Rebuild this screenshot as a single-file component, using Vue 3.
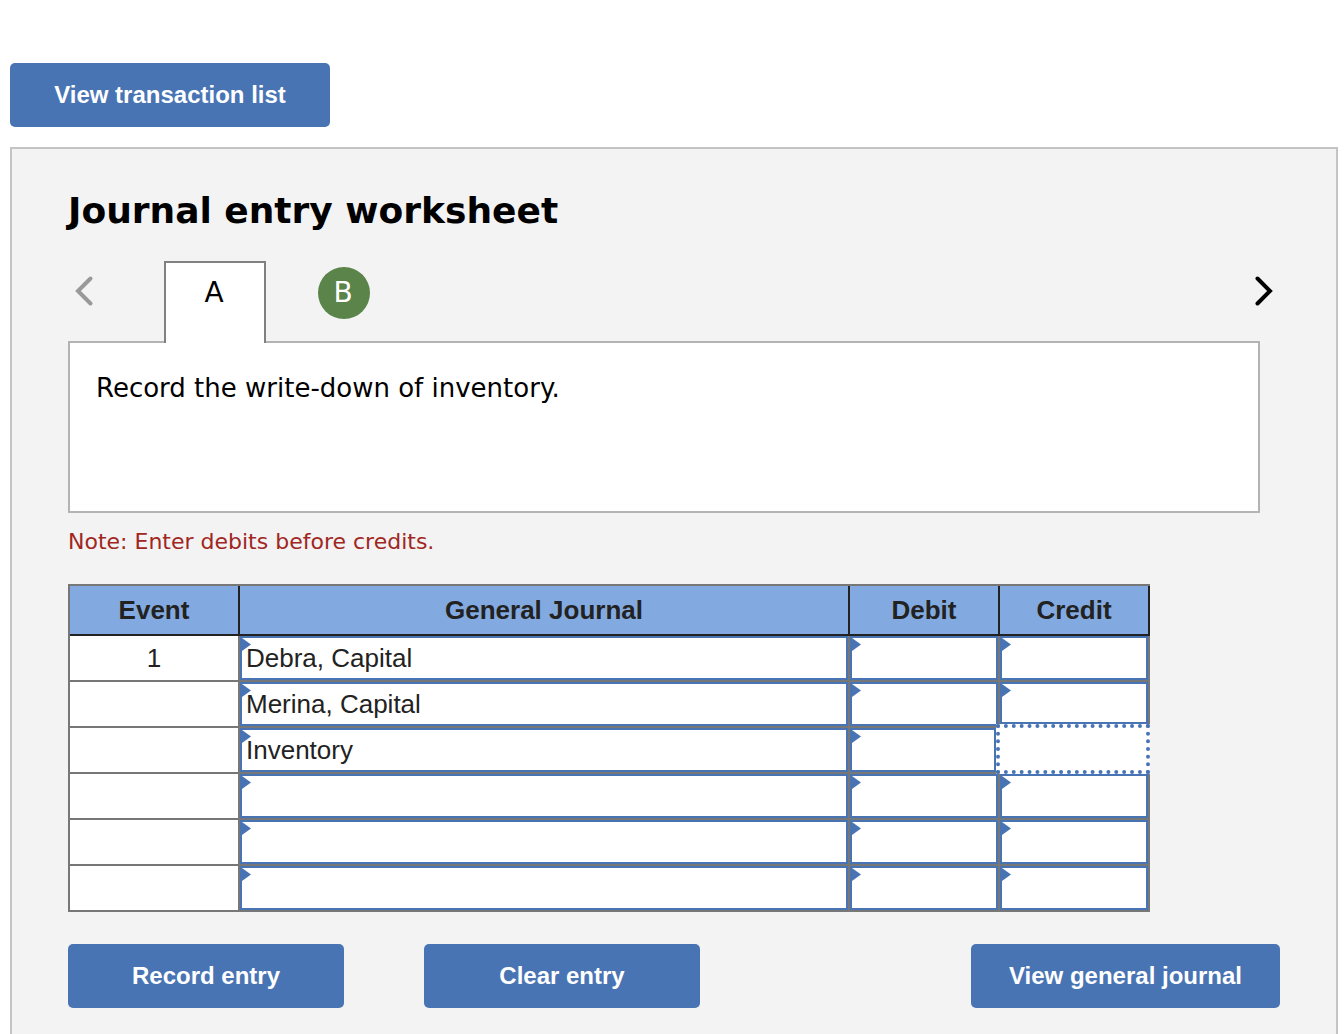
<script setup>
import { ref } from 'vue'

const rows = ref([
  { event: '1', account: 'Debra, Capital', debit: '', credit: '' },
  { event: '', account: 'Merina, Capital', debit: '', credit: '' },
  { event: '', account: 'Inventory', debit: '', credit: '' },
  { event: '', account: '', debit: '', credit: '' },
  { event: '', account: '', debit: '', credit: '' },
  { event: '', account: '', debit: '', credit: '' },
])

const fields = [
  { key: 'account', label: 'General Journal' },
  { key: 'debit', label: 'Debit' },
  { key: 'credit', label: 'Credit' },
]

const active = { row: 2, key: 'credit' }

function cellClass(rowIndex, key) {
  return {
    active: rowIndex === active.row && key === active.key,
    'above-active': rowIndex === active.row - 1 && key === active.key,
    'before-active': rowIndex === active.row && key === 'debit',
  }
}
</script>

<template>
  <main class="page">
    <button type="button" class="btn btn-list">View transaction list</button>

    <section class="panel">
      <h1 class="title">Journal entry worksheet</h1>

      <nav class="steps">
        <button type="button" class="arrow prev" aria-label="Previous entry" disabled>
          <svg width="20" height="32" viewBox="0 0 20 32">
            <path d="M16.5 3.5 L4 16 L16.5 28.5" />
          </svg>
        </button>
        <button type="button" class="tab">A</button>
        <button type="button" class="bubble">B</button>
        <button type="button" class="arrow next" aria-label="Next entry">
          <svg width="20" height="32" viewBox="0 0 20 32">
            <path d="M3.5 3.5 L16 16 L3.5 28.5" />
          </svg>
        </button>
      </nav>

      <div class="prompt">Record the write-down of inventory.</div>
      <p class="note">Note: Enter debits before credits.</p>

      <table class="journal">
        <colgroup>
          <col class="col-event" />
          <col />
          <col class="col-amount" />
          <col class="col-amount" />
        </colgroup>
        <thead>
          <tr>
            <th scope="col">Event</th>
            <th v-for="f in fields" :key="f.key" scope="col">{{ f.label }}</th>
          </tr>
        </thead>
        <tbody>
          <tr v-for="(row, i) in rows" :key="i">
            <td class="event">{{ row.event }}</td>
            <td v-for="f in fields" :key="f.key" class="entry" :class="cellClass(i, f.key)">
              <input v-model="row[f.key]" type="text" :aria-label="f.label + ', line ' + (i + 1)" />
            </td>
          </tr>
        </tbody>
      </table>

      <div class="actions">
        <button type="button" class="btn btn-entry">Record entry</button>
        <button type="button" class="btn btn-entry">Clear entry</button>
        <button type="button" class="btn btn-journal">View general journal</button>
      </div>
    </section>
  </main>
</template>

<style>
body {
  margin: 0;
  background: #fff;
}
</style>

<style scoped>
.page {
  padding: 63px 6px 0 10px;
  font-family: "Liberation Sans", Arial, sans-serif;
  color: #222;
}

.btn {
  height: 64px;
  padding: 0;
  border: 0;
  border-radius: 5px;
  background: #4874b4;
  color: #fff;
  font: bold 24px/64px "Liberation Sans", Arial, sans-serif;
}

.btn-list {
  display: block;
  width: 320px;
}

.panel {
  margin-top: 20px;
  padding: 38px 56px 26px;
  border: 2px solid #c4c4c4;
  border-bottom: 0;
  background: #f3f3f3;
}

.title {
  margin: 0;
  color: #000;
  font: bold 36px/48px "DejaVu Sans", Verdana, sans-serif;
}

.steps {
  display: flex;
  align-items: flex-start;
  margin-top: 26px;
}

.arrow {
  display: flex;
  margin-top: 14px;
  padding: 0;
  border: 0;
  background: none;
}

.arrow path {
  fill: none;
  stroke: #000;
  stroke-width: 4;
  stroke-linecap: round;
}

.prev {
  margin-left: 6px;
}

.prev path {
  stroke: #999;
}

.next {
  margin-left: auto;
  margin-right: 6px;
}

.tab,
.bubble {
  box-sizing: border-box;
  padding: 0 2px 0 0;
  font: 28px/52px "DejaVu Sans", Verdana, sans-serif;
}

.tab {
  position: relative;
  width: 102px;
  height: 82px;
  margin: 0 52px -2px 70px;
  padding-bottom: 20px;
  border: 2px solid #808080;
  border-bottom: 0;
  background: #fff;
  color: #000;
}

.bubble {
  width: 52px;
  height: 52px;
  margin-top: 6px;
  border: 0;
  border-radius: 50%;
  background: #5a8449;
  color: #fff;
}

.prompt {
  box-sizing: border-box;
  min-height: 172px;
  margin-right: 20px;
  padding: 29px 26px;
  border: 2px solid #b3b3b3;
  background: #fff;
  color: #000;
  font: 26px/32px "DejaVu Sans", Verdana, sans-serif;
}

.note {
  margin: 13px 0 26px;
  color: #a02622;
  font: 22px/32px "DejaVu Sans", Verdana, sans-serif;
}

.journal {
  width: 100%;
  max-width: 1082px;
  table-layout: fixed;
  border-collapse: separate;
  border-spacing: 0;
  border-top: 2px solid #777;
  border-left: 2px solid #777;
  font-size: 26px;
}

.col-event {
  width: 170px;
}

.col-amount {
  width: 150px;
}

.journal th {
  height: 48px;
  padding: 0;
  border-right: 2px solid #222;
  border-bottom: 2px solid #222;
  background: #83aae0;
  line-height: 48px;
}

.journal td {
  position: relative;
  height: 44px;
  padding: 0;
  border-right: 2px solid #777;
  border-bottom: 2px solid #777;
  background: #fff;
  line-height: 44px;
}

.event {
  text-align: center;
}

.entry input {
  display: block;
  box-sizing: border-box;
  width: 100%;
  height: 44px;
  margin: 0;
  padding: 0 4px;
  border: 2px solid #4874b4;
  border-radius: 0;
  outline: 0;
  background: #fff;
  color: #222;
  font: 26px/40px "Liberation Sans", Arial, sans-serif;
}

.entry::before {
  content: "";
  position: absolute;
  top: 2px;
  left: 2px;
  width: 9px;
  height: 13px;
  background: #4874b4;
  clip-path: polygon(0 0, 100% 50%, 0 100%);
}

.above-active input {
  height: 42px;
  margin-bottom: 2px;
}

.before-active input {
  width: calc(100% - 2px);
}

/* The selected cell's dotted frame lies over its neighbours' grid lines. */
.active::before {
  display: none;
}

.active input {
  position: absolute;
  top: -4px;
  left: -4px;
  width: calc(100% + 6px);
  height: 50px;
  border: 4px dotted #4874b4;
}

.actions {
  display: flex;
  gap: 80px;
  margin-top: 32px;
}

.btn-entry {
  width: 276px;
}

.btn-journal {
  width: 309px;
  margin-left: auto;
}
</style>
